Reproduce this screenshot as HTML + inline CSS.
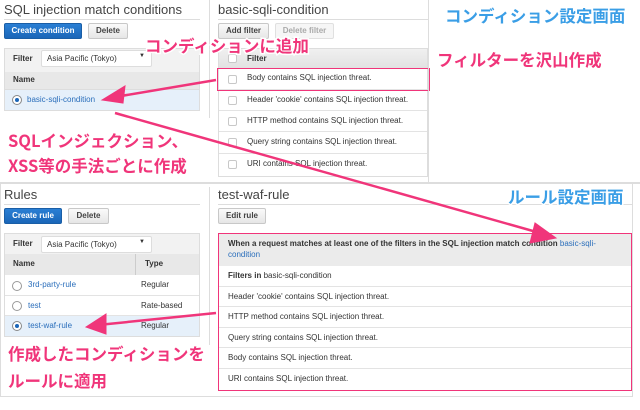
<!DOCTYPE html>
<html><head><meta charset="utf-8"><style>
*{box-sizing:border-box;margin:0;padding:0}
body{width:640px;height:410px;background:#fff;position:relative;overflow:hidden;font-family:"Liberation Sans","Noto Sans CJK JP",sans-serif;color:#333}
.a{position:absolute}
.t{font-size:13px;color:#444;white-space:nowrap}
.ul{height:1px;background:#ddd}
.btn{position:absolute;height:16px;border:1px solid #c8c8c8;border-radius:2px;background:linear-gradient(#fafafa,#e6e6e6);font-size:8px;font-weight:bold;color:#444;text-align:center;line-height:14px;white-space:nowrap}
.blue{background:linear-gradient(#2a7fd4,#1a66b8);border-color:#1a5ea6;color:#fff}
.dis{color:#aaa;background:#f6f6f6;border-color:#e0e0e0}
.row{position:absolute;font-size:8px;white-space:nowrap;border-bottom:1px solid #e3e3e3;line-height:20px}
.cb{position:absolute;width:9px;height:9px;border:1px solid #c8c8c8;border-radius:2px;background:#fff}
.rd{position:absolute;width:10px;height:10px;border:1px solid #999;border-radius:50%;background:#fff}
.lnk{color:#2a6ebb}
.jp{position:absolute;font-weight:bold;white-space:nowrap;paint-order:stroke fill;-webkit-text-stroke:3px #fff;font-family:"Noto Sans CJK JP",sans-serif;font-size:16.5px;line-height:20px}
.pk{color:#f0357a}
.bl{color:#3a9ee6}
</style></head><body>
<!-- top left -->
<div class="a t" style="left:4px;top:2px">SQL injection match conditions</div>
<div class="a ul" style="left:4px;top:19px;width:196px"></div>
<div class="btn blue" style="left:4px;top:23px;width:78px">Create condition</div>
<div class="btn" style="left:88px;top:23px;width:40px">Delete</div>
<div class="a" style="left:4px;top:48px;width:196px;height:63px;border:1px solid #ddd;background:#f2f2f2"></div>
<div class="a" style="left:13px;top:54px;font-size:8px;font-weight:bold">Filter</div>
<div class="a" style="left:41px;top:50px;width:111px;height:17px;background:#fff;border:1px solid #ddd;border-radius:2px;font-size:8px;padding:3px 5px">Asia Pacific (Tokyo)<span style="position:absolute;right:6px;top:2px;font-size:6px">▼</span></div>
<div class="a" style="left:5px;top:72px;width:194px;height:17px;background:#e8e8e8;font-size:8px;font-weight:bold;padding:3px 8px">Name</div>
<div class="a" style="left:5px;top:89px;width:194px;height:21px;background:#e6f0fa;border-top:1px solid #ddd"></div>
<div class="rd" style="left:12px;top:95px;border-color:#888"><div style="position:absolute;left:2px;top:2px;width:4px;height:4px;border-radius:50%;background:#1a66b8"></div></div>
<div class="a lnk" style="left:27px;top:95px;font-size:8px">basic-sqli-condition</div>
<div class="a" style="left:209px;top:0;width:1px;height:118px;background:#ddd"></div>
<!-- top right -->
<div class="a t" style="left:218px;top:2px">basic-sqli-condition</div>
<div class="a ul" style="left:218px;top:19px;width:210px"></div>
<div class="btn" style="left:218px;top:23px;width:51px">Add filter</div>
<div class="btn dis" style="left:275px;top:23px;width:59px">Delete filter</div>
<div class="a" style="left:218px;top:48px;width:210px;height:129px;border:1px solid #ddd"></div>
<div class="a" style="left:219px;top:49px;width:208px;height:19px;background:linear-gradient(#f0f0f0,#e2e2e2);font-size:8px;font-weight:bold;padding:5px 0 0 28px">Filter</div>
<div class="cb" style="left:228px;top:54px"></div>
<div class="row" style="left:219px;top:68px;width:208px;height:22px;padding-left:28px">Body contains SQL injection threat.</div>
<div class="row" style="left:219px;top:90px;width:208px;height:21px;padding-left:28px">Header 'cookie' contains SQL injection threat.</div>
<div class="row" style="left:219px;top:111px;width:208px;height:21px;padding-left:28px">HTTP method contains SQL injection threat.</div>
<div class="row" style="left:219px;top:132px;width:208px;height:22px;padding-left:28px">Query string contains SQL injection threat.</div>
<div class="row" style="left:219px;top:154px;width:208px;height:22px;padding-left:28px;border:0">URI contains SQL injection threat.</div>
<div class="cb" style="left:228px;top:75px"></div><div class="cb" style="left:228px;top:96px"></div><div class="cb" style="left:228px;top:117px"></div><div class="cb" style="left:228px;top:138px"></div><div class="cb" style="left:228px;top:160px"></div>
<div class="a" style="left:217px;top:68px;width:213px;height:23px;border:1.5px solid #f0357a"></div>
<div class="a" style="left:428px;top:0;width:1px;height:183px;background:#ddd"></div>
<!-- separator -->
<div class="a" style="left:0;top:182px;width:640px;height:2px;background:#ddd"></div>
<div class="a" style="left:0;top:184px;width:633px;height:213px;border:1px solid #ddd;border-top:0"></div>
<!-- bottom left -->
<div class="a t" style="left:4px;top:187px">Rules</div>
<div class="a ul" style="left:4px;top:204px;width:196px"></div>
<div class="btn blue" style="left:4px;top:208px;width:58px">Create rule</div>
<div class="btn" style="left:68px;top:208px;width:41px">Delete</div>
<div class="a" style="left:4px;top:233px;width:196px;height:104px;border:1px solid #ddd;background:#f2f2f2"></div>
<div class="a" style="left:13px;top:239px;font-size:8px;font-weight:bold">Filter</div>
<div class="a" style="left:41px;top:236px;width:111px;height:17px;background:#fff;border:1px solid #ddd;border-radius:2px;font-size:8px;padding:3px 5px">Asia Pacific (Tokyo)<span style="position:absolute;right:6px;top:2px;font-size:6px">▼</span></div>
<div class="a" style="left:5px;top:254px;width:194px;height:21px;background:#e8e8e8;font-size:8px;font-weight:bold;padding:5px 8px">Name<span style="position:absolute;left:140px">Type</span></div>
<div class="a" style="left:135px;top:254px;width:1px;height:21px;background:#ccc"></div>
<div class="row" style="left:5px;top:275px;width:194px;height:21px;background:#fff;padding-left:23px"><span class="lnk">3rd-party-rule</span><span style="position:absolute;left:136px">Regular</span></div>
<div class="row" style="left:5px;top:296px;width:194px;height:20px;background:#fff;padding-left:23px"><span class="lnk">test</span><span style="position:absolute;left:136px">Rate-based</span></div>
<div class="row" style="left:5px;top:316px;width:194px;height:20px;background:#e6f0fa;padding-left:23px;border:0"><span class="lnk">test-waf-rule</span><span style="position:absolute;left:136px">Regular</span></div>
<div class="rd" style="left:12px;top:281px"></div><div class="rd" style="left:12px;top:301px"></div>
<div class="rd" style="left:12px;top:321px;border-color:#888"><div style="position:absolute;left:2px;top:2px;width:4px;height:4px;border-radius:50%;background:#1a66b8"></div></div>
<div class="a" style="left:209px;top:187px;width:1px;height:158px;background:#ddd"></div>
<!-- bottom right -->
<div class="a t" style="left:218px;top:187px">test-waf-rule</div>
<div class="a ul" style="left:218px;top:204px;width:414px"></div>
<div class="btn" style="left:218px;top:208px;width:48px">Edit rule</div>
<div class="a" style="left:219px;top:234px;width:412px;height:32px;background:#ebebeb;font-size:8px;font-weight:bold;padding:4px 9px;line-height:11px">When a request matches at least one of the filters in the SQL injection match condition <span class="lnk" style="font-weight:normal">basic-sqli-<br>condition</span></div>
<div class="row" style="left:219px;top:266px;width:412px;height:21px;padding-left:9px"><b>Filters in</b> basic-sqli-condition</div>
<div class="row" style="left:219px;top:287px;width:412px;height:20px;padding-left:9px">Header 'cookie' contains SQL injection threat.</div>
<div class="row" style="left:219px;top:307px;width:412px;height:21px;padding-left:9px">HTTP method contains SQL injection threat.</div>
<div class="row" style="left:219px;top:328px;width:412px;height:20px;padding-left:9px">Query string contains SQL injection threat.</div>
<div class="row" style="left:219px;top:348px;width:412px;height:21px;padding-left:9px">Body contains SQL injection threat.</div>
<div class="row" style="left:219px;top:369px;width:412px;height:20px;padding-left:9px;border:0">URI contains SQL injection threat.</div>
<div class="a" style="left:218px;top:233px;width:414px;height:158px;border:1.5px solid #f0357a"></div>
<!-- arrows -->
<svg class="a" style="left:0;top:0" width="640" height="410">
<g fill="#f0357a" stroke="#f0357a">
<line x1="216" y1="80" x2="115" y2="97" stroke-width="2.5"/>
<polygon points="102,100 125,86 123,103" stroke-width="1"/>
<line x1="115" y1="113" x2="540" y2="233" stroke-width="2.5"/>
<polygon points="556,238 535,223 530,243" stroke-width="1"/>
<line x1="216" y1="313" x2="98" y2="325" stroke-width="2.5"/>
<polygon points="86,327 106,314 106,334" stroke-width="1"/>
</g></svg>
<!-- annotations -->
<div class="jp bl" style="left:445px;top:5px">コンディション設定画面</div>
<div class="jp pk" style="left:437px;top:49px">フィルターを沢山作成</div>
<div class="jp pk" style="left:145px;top:35px">コンディションに追加</div>
<div class="jp pk" style="left:8px;top:130px">SQLインジェクション、</div>
<div class="jp pk" style="left:8px;top:155px">XSS等の手法ごとに作成</div>
<div class="jp bl" style="left:508px;top:186px">ルール設定画面</div>
<div class="jp pk" style="left:8px;top:343px">作成したコンディションを</div>
<div class="jp pk" style="left:8px;top:370px">ルールに適用</div>
</body></html>
